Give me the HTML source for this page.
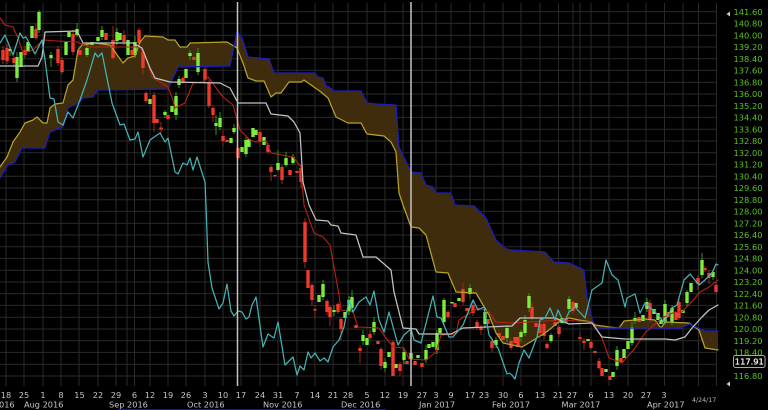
<!DOCTYPE html>
<html><head><meta charset="utf-8"><style>
html,body{margin:0;padding:0;background:#000}
svg{display:block;filter:blur(.35px)}
text{font-family:"DejaVu Sans","Liberation Sans",sans-serif}
.p text{font-size:8.3px;fill:#5cc41c}
.d text{font-size:8.2px;fill:#c4c4c4;text-anchor:middle}
.m text{font-size:8.2px;fill:#c4c4c4}
</style></head><body>
<svg width="768" height="410" viewBox="0 0 768 410" xmlns="http://www.w3.org/2000/svg">
<rect width="768" height="410" fill="#000"/>
<!-- grid -->
<path stroke="#2a2a2a" stroke-width="1" fill="none" d="M0 11.7H717M0 23.4H717M0 35.2H717M0 47H717M0 58.7H717M0 70.4H717M0 82.2H717M0 94H717M0 105.7H717M0 117.4H717M0 129.2H717M0 141H717M0 152.7H717M0 164.4H717M0 176.2H717M0 188H717M0 199.7H717M0 211.4H717M0 223.2H717M0 235H717M0 246.7H717M0 258.4H717M0 270.2H717M0 282H717M0 293.7H717M0 305.4H717M0 317.2H717M0 329H717M0 340.7H717M0 352.4H717M0 364.2H717M0 376H717
M6 3V386M24 3V386M43 3V386M61 3V386M79 3V386M98 3V386M116 3V386M127 3V386M134.5 3V386M150 3V386M168 3V386M186 3V386M205 3V386M223 3V386M241 3V386M260 3V386M278 3V386M297 3V386M315 3V386M333 3V386M348 3V386M367 3V386M385 3V386M403 3V386M422 3V386M436 3V386M451 3V386M470 3V386M484 3V386M503 3V386M521 3V386M540 3V386M558.5 3V386M573 3V386M580 3V386M591 3V386M609 3V386M628 3V386M646 3V386M664.5 3V386M683 3V386M698.5 3V386M716.5 3V386"/>
<!-- cloud -->
<path fill="#3e2c0c" d="M0 167L7 157L13 142L20 132L25 123L33 120L37 117L43 123L47 123L50 108L55 104L63 103L68 85L73 80L78 50L82 45L95 43L110 45L115 52L123 63L128 58L135 56L140 42L145 36L163 37L168 40L175 40L180 47L187 47L190 43L227 42L237 48L243 63L248 78L256 81L264 81L271 97L276 93L281 93L289 82L301 82L304 80L311 85L321 92L328 98L336 117L348 123L361 123L367 134L384 136L391 142L396 152L399 193L403 205L411 227L419 228L426 235L436 272L448 273L456 292L476 293L489 315L496 333L503 343L512 345L522 347L532 341L545 333L559 322L569 318L579 320L592 322L595 325L609 327L619 328L624 321L645 319L655 320L661 328L665 322L689 323L699 330L705 348L718 350L718 331L705 331L689 324L682 328L599 328L594 327L587 297L584 270L569 263L554 262L545 252L512 250L506 249L496 240L486 218L474 206L455 205L451 193L436 193L433 187L426 185L421 173L411 172L399 147L396 105L376 104L367 103L361 91L334 91L329 87L326 86L323 78L318 77L315 73L274 73L269 59L248 57L242 38L237 32L230 66L178 67L168 89L98 90L93 97L83 98L80 102L68 108L63 127L50 132L45 148L22 148L15 162L8 165L0 178Z"/>
<!-- wicks -->
<g fill="none" stroke-width="1">
<path stroke="#2f9a18" d="M10 47V56M17 52V82M39 10V33M51 52V67M77 23V37M87 44V57M102 26V40M117 28V45M135 36V58M165 110V118M176 92V120M179 76V88M190 50V60M198 48V75M216 115V135M220 112V130M234 124V134M246 137V157M278 150V172M286 152V167M293 154V165M323 280V300M334 305V316M349 296V315M352 290V312M363 330V345M374 317V335M385 358V372M404 348V364M426 345V363M437 330V354M444 298V325M470 284V298M485 308V328M496 337V348M507 325V342M521 330V342M525 315V336M529 293V312M551 333V343M569 296V312M617 346V370M632 322V346M635 312V324M647 298V312M665 300V325M672 305V325M687 290V306M702 253V278M713 270V280"/>
<path stroke="#a5261a" d="M3 46V64M7 44V64M14 56V66M25 46V58M36 24V40M58 46V66M62 57V74M73 30V55M113 26V60M124 30V45M132 46V57M139 28V48M143 50V75M146 91V103M154 92V132M161 122V134M183 76V84M205 66V84M209 80V108M213 106V122M223 130V146M238 146V160M260 130V146M268 143V154M271 165V181M282 165V184M301 165V188M305 218V268M312 283V306M315 305V318M327 299V315M330 305V326M338 302V314M341 317V340M360 345V363M370 330V340M381 347V370M393 340V376M400 362V376M448 310V319M463 283V305M473 300V316M477 320V330M481 325V335M492 338V352M511 339V350M532 303V320M540 322V335M544 322V340M547 342V350M559 325V337M573 300V314M580 333V341M584 338V350M591 340V350M599 358V370M650 300V322M679 296V320M698 275V290M705 266V272M709 270V284M716 282V294"/>
</g>
<!-- candle bodies -->
<path fill="none" stroke="#7cec3e" stroke-width="3.4" d="M10 49V51M17 57V78M21 52V67M28 42V52M32 26V38M39 12V30M51 55V58M66 42V55M69 32V37M77 29V35M87 48V55M92 42V45M98 37V41M102 30V37M117 32V41M120 33V40M128 40V55M135 42V55M150 99V104M165 112V115M172 106V112M176 96V115M179 79V85M186 69V78M190 53V56M198 53V72M216 123V126M220 118V127M231 138V143M234 128V132M242 147V152M246 140V154M249 139V147M253 128V137M256 130V135M264 137V145M278 163V170M286 158V165M293 157V163M319 295V302M323 284V297M334 310V312M345 312V318M349 300V312M352 297V308M363 335V341M367 338V345M374 322V332M385 362V368M389 352V357M396 364V368M404 352V360M411 353V359M418 355V358M426 350V360M429 344V348M433 342V347M437 333V350M440 328V333M444 300V322M452 302V303.5M459 298V301M470 288V294M485 312V324M496 340V345M507 328V338M521 332V337M525 320V333M529 296V308M551 335V341M562 318V323M569 299V309M576 303V308M588 339V341M606 369V372M613 372V377M617 350V366M624 349V358M628 341V349M632 327V343M635 318V321M643 315V321M647 302V309M654 309V314M658 313V320M661 320V324M665 304V322M672 308V322M683 310V313M687 292V303M691 283V292M702 260V275M713 272V277"/>
<path fill="none" stroke="#ee3a2a" stroke-width="3.4" d="M3 50V60M7 48V61M14 58V63M25 50V55M36 29V38M58 49V63M62 60V72M73 34V52M80 50V55M106 33V40M113 40V58M124 35V42M132 50V55M139 30V43M143 52V68M146 93V101M154 95V123M157 119V123M161 127.5V129.5M168 115V119M183 78V82M194 57V60M205 69V80M209 83V106M213 108V115M223 136V141M227 140V142M238 148V158M260 132V142M268 145V152M271 167V172M275 175V176.5M282 167V180M290 170V175M297 171V173M301 168V182M305 222V262M308 270V288M312 285V300M315 309V310.5M327 301V312M330 307V317M338 304V312M341 319V329M356 325V328M360 348V351M370 334V338M378 341V344M381 349V366M393 342V376M400 364V371M407 361V364M415 361V365M422 363V367M448 312V317M455 303V307M463 289V302M467 308V311M473 305V313M477 322V327M481 328V330M488 319V324M492 341V348M499 333V337M503 336V340M511 341V348M515 337V343M518 337V347M532 307V318M536 323V327M540 324V333M544 324V336M547 344V348M555 322V326M559 327V334M566 318V322M573 302V311M580 337V339M584 341V343M591 342V348M595 351V353M599 361V368M602 368V376M610 376V380M621 358V362M639 317V322M650 303V320M668 312V317M676 312V320M679 302V318M698 278V284M705 268V270M709 273V278M716 285V292"/>
<!-- indicator lines -->
<g fill="none" stroke-linejoin="round" stroke-linecap="round">
<path stroke="#b5a22e" stroke-width="1.25" d="M0 167L7 157L13 142L20 132L25 123L33 120L37 117L43 123L47 123L50 108L55 104L63 103L68 85L73 80L78 50L82 45L95 43L110 45L115 52L123 63L128 58L135 56L140 42L145 36L163 37L168 40L175 40L180 47L187 47L190 43L227 42L237 48L243 63L248 78L256 81L264 81L271 97L276 93L281 93L289 82L301 82L304 80L311 85L321 92L328 98L336 117L348 123L361 123L367 134L384 136L391 142L396 152L399 193L403 205L411 227L419 228L426 235L436 272L448 273L456 292L476 293L489 315L496 333L503 343L512 345L522 347L532 341L545 333L559 322L569 318L579 320L592 322L595 325L609 327L619 328L624 321L645 319L655 320L661 328L665 322L689 323L699 330L705 348L718 350"/>
<path stroke="#1c1cc0" stroke-width="1.25" d="M0 178L8 165L15 162L22 148L45 148L50 132L63 127L68 108L80 102L83 98L93 97L98 90L168 89L178 67L230 66L237 32L242 38L248 57L269 59L274 73L315 73L318 77L323 78L326 86L329 87L334 91L361 91L367 103L376 104L396 105L399 147L411 172L421 173L426 185L433 187L436 193L451 193L455 205L474 206L486 218L496 240L506 249L512 250L545 252L554 262L569 263L584 270L587 297L594 327L599 328L682 328L689 324L705 331L718 331"/>
<path stroke="#b82216" stroke-width="1.1" d="M0 18L5 25L13 27L18 38L23 53L33 50L43 40L57 41L77 42L90 47L140 47L147 60L152 77L160 82L168 87L173 100L175 108L185 103L193 83L203 82L208 77L223 97L233 105L240 130L250 140L256 142L266 141L271 153L293 157L301 167L302 182L304 205L314 233L323 237L330 245L339 295L341 310L353 312L358 327L379 328L386 338L393 347L404 348L409 359L426 360L436 352L441 335L456 334L459 320L478 308L489 312L496 322L512 323L529 322L562 320L592 322L602 338L609 358L622 363L635 348L645 333L662 318L675 312L682 312L695 298L700 292L709 287L718 280"/>
<path stroke="#c4c4c4" stroke-width="1.25" d="M0 66L38 66L42 57L45 32L77 31L83 43L133 43L142 48L150 68L155 78L170 82L220 83L230 88L238 103L266 103L271 114L288 116L294 122L300 133L303 182L309 205L316 220L328 221L331 225L338 226L341 233L356 235L363 257L376 257L391 270L394 292L403 328L416 329L419 334L451 334L463 328L512 326L520 318L555 318L569 324L592 323L602 337L625 339L665 339L675 340L685 337L692 328L702 317L709 310L718 305"/>
<path stroke="#45b2b4" stroke-width="1.25" d="M0 43L5 35L13 55L20 33L23 38L26 37L35 54L42 40L45 60L50 98L54 99L58 122L63 125L68 112L73 118L80 100L87 80L95 53L98 57L102 53L112 103L120 125L124 124L130 140L135 139L138 132L143 157L150 140L160 133L165 142L168 138L175 172L178 174L183 163L187 165L190 158L193 170L197 157L205 182L206 205L208 262L212 288L219 309L223 303L227 284L231 311L234 316L238 311L242 312L246 319L249 317L252 305L256 297L263 347L268 334L274 338L278 322L285 365L293 357L297 375L300 366L304 370L308 352L311 358L315 353L320 361L324 358L328 362L333 347L339 340L344 327L349 300L353 312L359 302L366 297L370 305L374 291L379 320L384 332L389 312L398 345L404 335L411 329L414 340L421 343L433 296L437 317L441 318L449 337L453 337L463 325L473 300L478 310L484 307L489 335L498 348L507 374L509 373L512 375L515 379L519 363L524 350L529 358L537 337L540 320L545 318L550 308L555 320L558 310L564 323L569 312L575 307L585 318L592 290L602 283L606 260L612 275L618 280L625 307L627 298L635 294L640 313L645 303L655 312L664 322L672 308L677 305L684 280L690 274L695 280L699 285L705 280L712 273L716 264L718 265"/>
</g>
<!-- vertical markers -->
<path stroke="#c4c4c4" stroke-width="1.5" d="M237.5 2V386M411 2V386"/>
<!-- bottom blue edge -->
<path stroke="#14149c" stroke-width="1.2" d="M118 409.5H386"/>
<!-- triangles -->
<path fill="#cfcfcf" d="M726.5 14L730 11.5V16.5Z"/>
<path fill="#cfcfcf" d="M726.5 384L730 381.5V386.5Z"/>
<!-- price labels -->
<g class="p">
<text x="733.5" y="14.8">141.60</text>
<text x="733.5" y="26.5">140.80</text>
<text x="733.5" y="38.3">140.00</text>
<text x="733.5" y="50">139.20</text>
<text x="733.5" y="61.8">138.40</text>
<text x="733.5" y="73.5">137.60</text>
<text x="733.5" y="85.3">136.80</text>
<text x="733.5" y="97">136.00</text>
<text x="733.5" y="108.8">135.20</text>
<text x="733.5" y="120.5">134.40</text>
<text x="733.5" y="132.3">133.60</text>
<text x="733.5" y="144">132.80</text>
<text x="733.5" y="155.8">132.00</text>
<text x="733.5" y="167.5">131.20</text>
<text x="733.5" y="179.3">130.40</text>
<text x="733.5" y="191">129.60</text>
<text x="733.5" y="202.8">128.80</text>
<text x="733.5" y="214.5">128.00</text>
<text x="733.5" y="226.3">127.20</text>
<text x="733.5" y="238">126.40</text>
<text x="733.5" y="249.8">125.60</text>
<text x="733.5" y="261.5">124.80</text>
<text x="733.5" y="273.3">124.00</text>
<text x="733.5" y="285">123.20</text>
<text x="733.5" y="296.8">122.40</text>
<text x="733.5" y="308.5">121.60</text>
<text x="733.5" y="320.3">120.80</text>
<text x="733.5" y="332">120.00</text>
<text x="733.5" y="343.8">119.20</text>
<text x="733.5" y="355.5">118.40</text>
<text x="733.5" y="379">116.80</text>
</g>
<rect x="733.5" y="355.5" width="31.5" height="12" rx="2" fill="#000" stroke="#a8a8a8" stroke-width="1"/>
<text x="734.8" y="364.7" font-size="8.3" fill="#ececec" stroke="#ececec" stroke-width=".3">117.91</text>
<text x="692" y="402" font-size="6.3" fill="#bcbcbc">4/24/17</text>
<!-- day labels -->
<g class="d">
<text x="6" y="398">18</text><text x="24" y="398">25</text><text x="43" y="398">1</text><text x="61" y="398">8</text><text x="79.5" y="398">15</text><text x="98" y="398">22</text><text x="116" y="398">29</text><text x="134.5" y="398">6</text><text x="150" y="398">12</text><text x="168" y="398">19</text><text x="186" y="398">26</text><text x="205" y="398">3</text><text x="223" y="398">10</text><text x="241" y="398">17</text><text x="260" y="398">24</text><text x="278" y="398">31</text><text x="297" y="398">7</text><text x="315" y="398">14</text><text x="333" y="398">21</text><text x="348" y="398">28</text><text x="367" y="398">5</text><text x="385" y="398">12</text><text x="403" y="398">19</text><text x="422" y="398">27</text><text x="436" y="398">3</text><text x="451" y="398">9</text><text x="470" y="398">17</text><text x="484" y="398">23</text><text x="503" y="398">30</text><text x="521" y="398">6</text><text x="540" y="398">13</text><text x="558" y="398">21</text><text x="572" y="398">27</text><text x="591" y="398">6</text><text x="609" y="398">13</text><text x="628" y="398">20</text><text x="646" y="398">27</text><text x="664" y="398">3</text>
</g>
<g class="m">
<text x="-1" y="407.5">016</text><text x="24" y="407.5">Aug 2016</text><text x="109" y="407.5">Sep 2016</text><text x="187" y="407.5">Oct 2016</text><text x="263" y="407.5">Nov 2016</text><text x="341" y="407.5">Dec 2016</text><text x="419" y="407.5">Jan 2017</text><text x="492" y="407.5">Feb 2017</text><text x="561.5" y="407.5">Mar 2017</text><text x="647" y="407.5">Apr 2017</text>
</g>
</svg>
</body></html>
